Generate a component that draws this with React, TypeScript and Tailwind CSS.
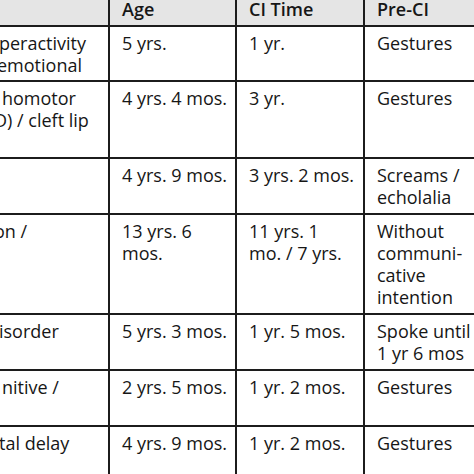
import React from "react";

type Row = {
  h: string;
  diag: { text: string; cls: string }[];
  age: React.ReactNode;
  ci: React.ReactNode;
  pre: React.ReactNode;
};

const rows: Row[] = [
  {
    h: "h-[55px]",
    diag: [
      { text: "peractivity", cls: "-ml-[1px]" },
      { text: "emotional", cls: "-ml-[3px]" },
    ],
    age: "5 yrs.",
    ci: "1 yr.",
    pre: "Gestures",
  },
  {
    h: "h-[77px]",
    diag: [
      { text: "homotor", cls: "ml-[2px]" },
      { text: "D) / cleft lip", cls: "-ml-[6px]" },
    ],
    age: "4 yrs. 4 mos.",
    ci: "3 yr.",
    pre: "Gestures",
  },
  {
    h: "h-[56px]",
    diag: [],
    age: "4 yrs. 9 mos.",
    ci: "3 yrs. 2 mos.",
    pre: (
      <>
        Screams /<br />
        echolalia
      </>
    ),
  },
  {
    h: "h-[100px]",
    diag: [{ text: "on /", cls: "-ml-[6px]" }],
    age: (
      <>
        13 yrs. 6<br />
        mos.
      </>
    ),
    ci: (
      <>
        11 yrs. 1<br />
        mo. / 7 yrs.
      </>
    ),
    pre: (
      <>
        Without
        <br />
        communi-
        <br />
        cative
        <br />
        intention
      </>
    ),
  },
  {
    h: "h-[56px]",
    diag: [{ text: "isorder", cls: "-ml-[1px]" }],
    age: "5 yrs. 3 mos.",
    ci: "1 yr. 5 mos.",
    pre: (
      <>
        Spoke until
        <br />1 yr 6 mos
      </>
    ),
  },
  {
    h: "h-[56px]",
    diag: [{ text: "nitive /", cls: "ml-[2px]" }],
    age: "2 yrs. 5 mos.",
    ci: "1 yr. 2 mos.",
    pre: "Gestures",
  },
  {
    h: "h-[60px]",
    diag: [{ text: "tal delay", cls: "-ml-[1px]" }],
    age: "4 yrs. 9 mos.",
    ci: "1 yr. 2 mos.",
    pre: "Gestures",
  },
];

const line = "border-[#1c1c1c]";

export default function App() {
  return (
    <div
      className="w-[474px] h-[474px] overflow-hidden bg-white text-[#161616] text-[18px] leading-[22px]"
      style={{ fontFamily: '"Open Sans", "Noto Sans", sans-serif' }}
    >
      <div className="w-[500px]">
        {/* Header */}
        <div className={`grid grid-cols-[110px_127px_128px_135px] h-[27px] bg-[#e5e5e5] border-b-2 ${line} font-semibold leading-[19px]`}>
          <div className={`border-r-2 ${line}`} />
          <div className={`border-r-2 ${line} pl-3`}>Age</div>
          <div className={`border-r-2 ${line} pl-3`}>CI Time</div>
          <div className="pl-3">Pre-CI</div>
        </div>

        {rows.map((r, i) => (
          <div
            key={i}
            className={`grid grid-cols-[110px_127px_128px_135px] ${r.h} border-b-2 ${line}`}
          >
            <div className={`border-r-2 ${line} overflow-hidden pt-[5px]`}>
              {r.diag.map((d, j) => (
                <div key={j} className={`whitespace-nowrap ${d.cls}`}>
                  {d.text}
                </div>
              ))}
            </div>
            <div className={`border-r-2 ${line} pl-3 pt-[5px] whitespace-nowrap`}>{r.age}</div>
            <div className={`border-r-2 ${line} pl-3 pt-[5px] whitespace-nowrap`}>{r.ci}</div>
            <div className="pl-3 pt-[5px] whitespace-nowrap">{r.pre}</div>
          </div>
        ))}
      </div>
    </div>
  );
}
